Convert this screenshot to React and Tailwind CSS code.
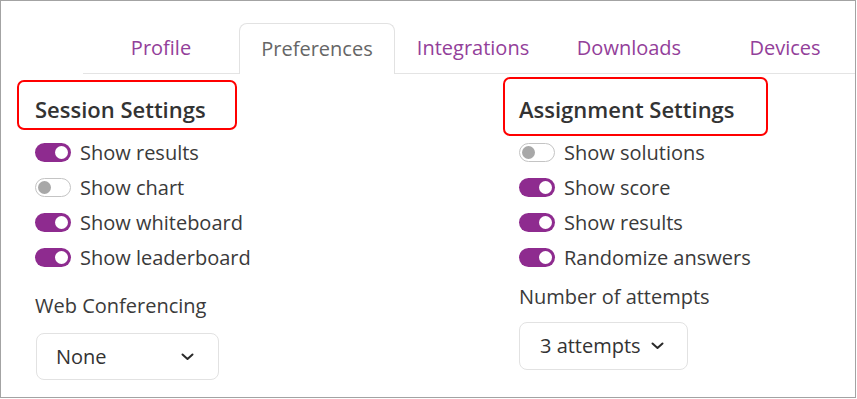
import React from 'react'

const tabs = ['Profile', 'Preferences', 'Integrations', 'Downloads', 'Devices']

function Toggle({ on }) {
  return on ? (
    <div className="w-[36px] h-[19px] rounded-full bg-[#8e2b8f] flex items-center justify-end pr-[3px]">
      <div className="w-[13px] h-[13px] rounded-full bg-white" />
    </div>
  ) : (
    <div className="w-[36px] h-[19px] rounded-full bg-white border border-[#c4c4c4] flex items-center pl-[2px]">
      <div className="w-[13px] h-[13px] rounded-full bg-[#a8a8a8]" />
    </div>
  )
}

function Row({ on, label }) {
  return (
    <div className="h-[35px] flex items-center">
      <Toggle on={on} />
      <span className="ml-[9px] text-[20px] text-[#3a3a3a]">{label}</span>
    </div>
  )
}

function Chevron() {
  return (
    <svg width="13" height="8" viewBox="0 0 13 8" fill="none">
      <path d="M1.5 1.5 L6.5 6 L11.5 1.5" stroke="#2a2a2a" strokeWidth="2" strokeLinecap="round" strokeLinejoin="round" />
    </svg>
  )
}

export default function App() {
  return (
    <div className="relative w-[856px] h-[398px] bg-white border border-[#a3a3a3] overflow-hidden font-['Open_Sans',sans-serif]">
      {/* tab bar */}
      <div className="ml-[82px] mt-[22px] flex border-b border-[#e4e4e4]">
        {tabs.map((t) => (
          <div
            key={t}
            className={
              t === 'Preferences'
                ? 'shrink-0 w-[156px] h-[51px] -mb-px flex items-center justify-center text-[20px] text-[#666] bg-white border border-b-0 border-[#e2e2e2] rounded-t-[8px]'
                : 'shrink-0 w-[156px] h-[50px] flex items-center justify-center text-[20px] text-[#93409a]'
            }
          >
            {t}
          </div>
        ))}
      </div>

      <div className="flex">
        {/* session settings */}
        <div className="shrink-0 w-[518px] pl-[34px]">
          <h2 className="mt-[21px] h-[28px] leading-[28px] text-[22px] font-semibold text-[#333]">Session Settings</h2>
          <div className="mt-[12px]">
            <Row on label="Show results" />
            <Row on={false} label="Show chart" />
            <Row on label="Show whiteboard" />
            <Row on label="Show leaderboard" />
          </div>
          <div className="mt-[18px] h-[26px] leading-[26px] text-[20px] text-[#3a3a3a]">Web Conferencing</div>
          <div className="mt-[14px] ml-px w-[183px] h-[47px] border border-[#e2e2e2] rounded-[8px] flex items-center justify-between pl-[19px] pr-[24px]">
            <span className="text-[20px] text-[#333]">None</span>
            <Chevron />
          </div>
        </div>

        {/* assignment settings */}
        <div>
          <h2 className="mt-[21px] h-[28px] leading-[28px] text-[22px] font-semibold text-[#333]">Assignment Settings</h2>
          <div className="mt-[12px]">
            <Row on={false} label="Show solutions" />
            <Row on label="Show score" />
            <Row on label="Show results" />
            <Row on label="Randomize answers" />
          </div>
          <div className="mt-[9px] h-[26px] leading-[26px] text-[20px] text-[#3a3a3a]">Number of attempts</div>
          <div className="mt-[12px] w-[169px] h-[48px] border border-[#e2e2e2] rounded-[8px] flex items-center pl-[20px] gap-[10px]">
            <span className="text-[20px] text-[#333]">3 attempts</span>
            <Chevron />
          </div>
        </div>
      </div>

      {/* annotation boxes */}
      <div className="absolute left-[16px] top-[79px] w-[220px] h-[50px] border-2 border-[#ff0000] rounded-[7px]" />
      <div className="absolute left-[502px] top-[76px] w-[265px] h-[59px] border-2 border-[#ff0000] rounded-[7px]" />
    </div>
  )
}
